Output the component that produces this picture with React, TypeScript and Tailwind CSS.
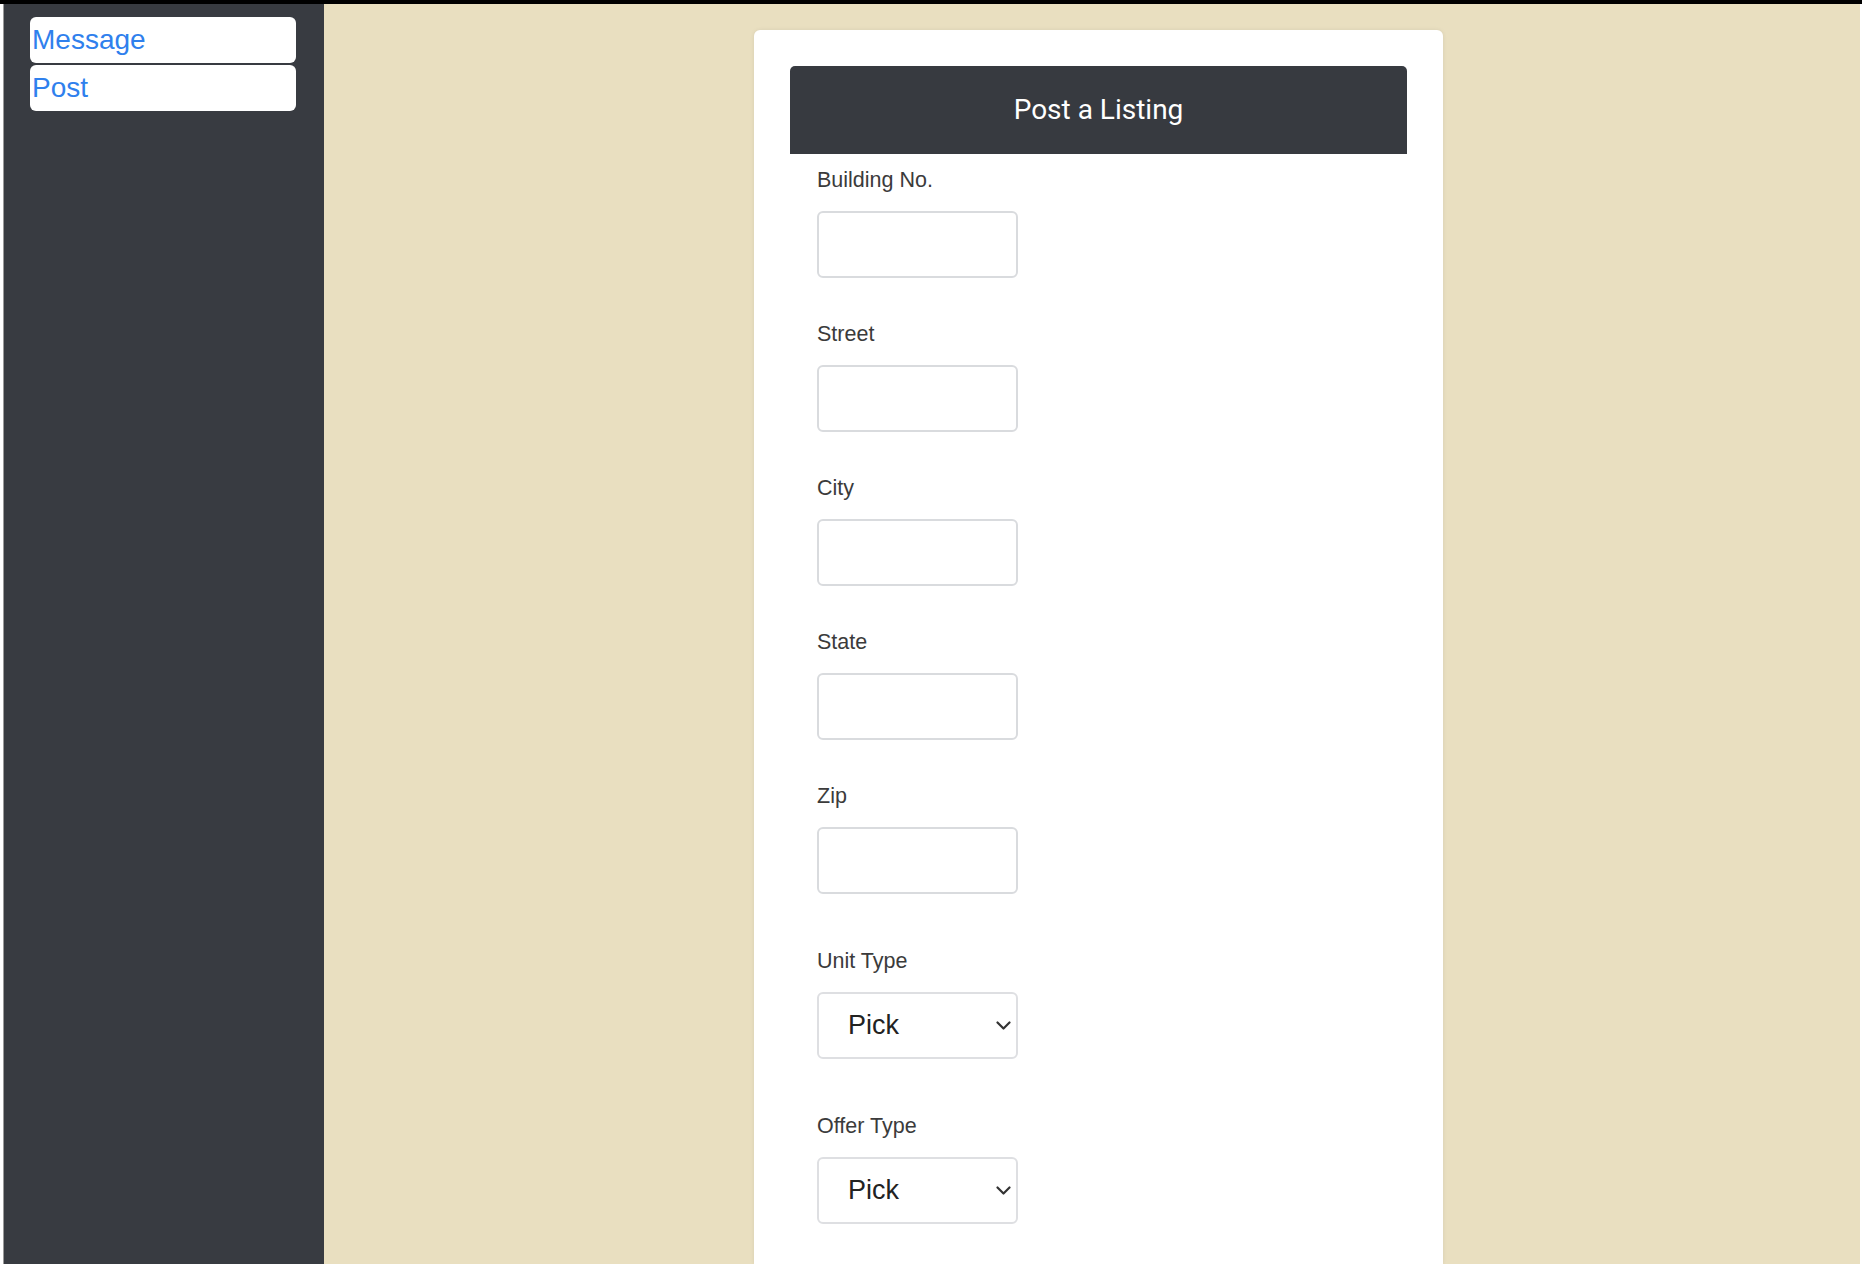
const textFields = ["Building No.", "Street", "City", "State", "Zip"];
const pickFields = ["Unit Type", "Offer Type"];

function TextField({ label }: { label: string }) {
  return (
    <div className="flex flex-col h-[154px]">
      <label className="h-[24px] leading-[24px] mt-[1px] text-[21.5px] text-[#3b3b3b] font-['Liberation_Sans',sans-serif]">
        {label}
      </label>
      <input
        type="text"
        className="mt-[19px] w-[201px] h-[67px] rounded-[6px] border-2 border-[#d9dbde] bg-white outline-none"
      />
    </div>
  );
}

function PickField({ label }: { label: string }) {
  return (
    <div className="flex flex-col h-[165px]">
      <label className="h-[24px] leading-[24px] mt-[1px] text-[21.5px] text-[#3b3b3b] font-['Liberation_Sans',sans-serif]">
        {label}
      </label>
      <div className="relative mt-[19px] w-[201px] h-[67px]">
        <select
          defaultValue="pick"
          className="appearance-none w-full h-full rounded-[6px] border-2 border-[#dedfe2] bg-white pl-[29px] text-[27px] text-[#222] font-['Liberation_Sans',sans-serif] outline-none"
        >
          <option value="pick">Pick</option>
        </select>
        {/* chevron */}
        <svg
          className="absolute right-[7px] top-[29px] pointer-events-none"
          width="15"
          height="9"
          viewBox="0 0 15 9"
          fill="none"
        >
          <path d="M1.5 1.5l6 6 6-6" stroke="#333" strokeWidth="2.2" strokeLinecap="round" strokeLinejoin="round" />
        </svg>
      </div>
    </div>
  );
}

export default function App() {
  return (
    <div className="w-[1862px] h-[1272px] bg-white flex flex-col border-t-[4px] border-black">
      <div className="flex flex-1 pl-[3px] pr-[2px] pb-[8px] min-h-0">
        {/* sidebar */}
        <aside className="w-[321px] bg-[#383b41] pt-[13px] pl-[26px] flex flex-col gap-[2px] border-l border-[#9a9a9a]">
          <button className="w-[266px] h-[46px] rounded-[6px] bg-white text-left pl-[2px] text-[28px] text-[#2f80ed] font-['Liberation_Sans',sans-serif]">
            Message
          </button>
          <button className="w-[266px] h-[46px] rounded-[6px] bg-white text-left pl-[2px] text-[28px] text-[#2f80ed] font-['Liberation_Sans',sans-serif]">
            Post
          </button>
        </aside>

        {/* main */}
        <main className="flex-1 bg-[#e9dfc0] pt-[26px] pl-[430px] overflow-hidden">
          <div className="w-[689px] h-full bg-white rounded-t-[6px] shadow-[0_0_4px_rgba(0,0,0,0.08)] pt-[36px] px-[36px]">
            <div className="h-[88px] bg-[#373a40] rounded-t-[5px] flex items-center justify-center">
              <h2 className="text-[28px] text-white font-['Roboto',sans-serif]">Post a Listing</h2>
            </div>
            <div className="pl-[27px] pt-[13px]">
              {textFields.map((f) => (
                <TextField key={f} label={f} />
              ))}
              <div className="h-[11px]" />
              {pickFields.map((f) => (
                <PickField key={f} label={f} />
              ))}
            </div>
          </div>
        </main>
      </div>
    </div>
  );
}
